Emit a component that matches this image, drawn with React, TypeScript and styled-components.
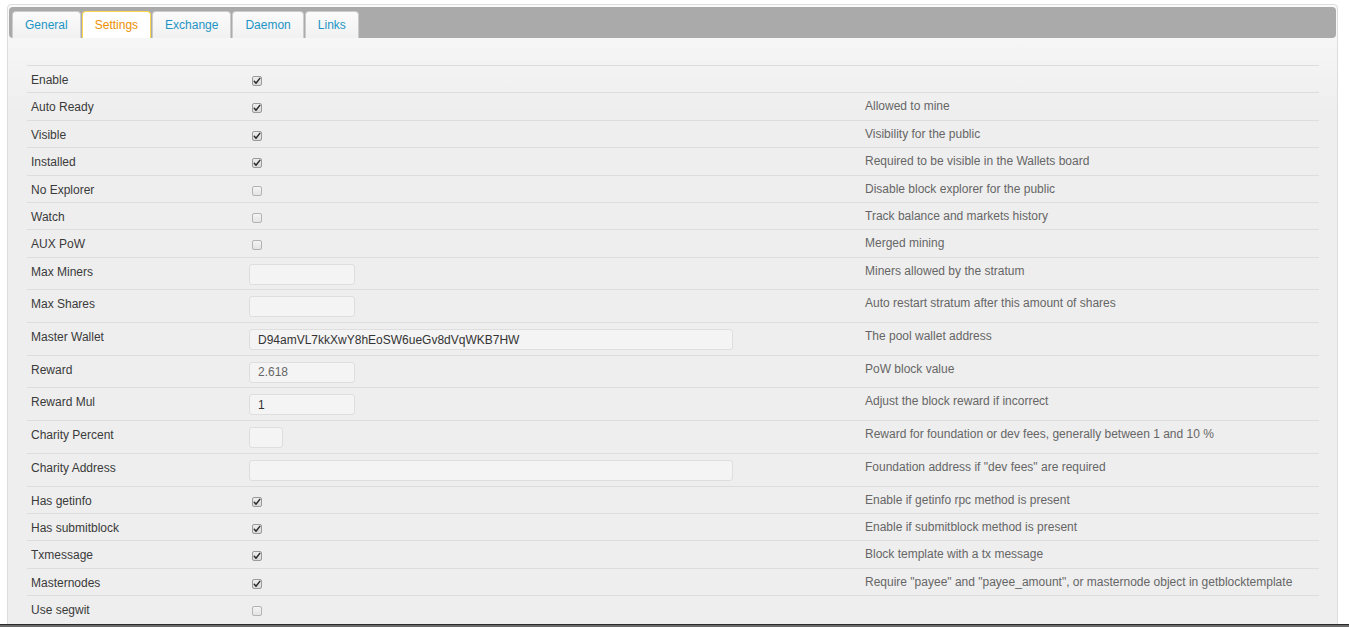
import React from "react";
import styled, { createGlobalStyle } from "styled-components";

const Global = createGlobalStyle`
  html, body { margin: 0; padding: 0; background: #fff; }
  body { font-family: "Liberation Sans", Arial, sans-serif; font-size: 12px; color: #333; }
`;

const Page = styled.div`
  padding: 4px 11px 0 7px;
`;

const Panel = styled.div`
  border: 1px solid #dddddd;
  border-radius: 4px;
  background: linear-gradient(#fafafa, #f3f3f3 60px, #eeeeee 110px);
  padding: 2px 1px 40px 1px;
`;

const TabBar = styled.div`
  display: flex;
  gap: 1px;
  background: #aaaaaa;
  border-radius: 4px;
  padding: 4px 3px 0 3px;
  height: 27px;
`;

const Tab = styled.div<{ $active?: boolean }>`
  display: flex;
  align-items: center;
  height: 26px;
  padding: 0 12px;
  border: 1px solid ${(p) => (p.$active ? "#fbd850" : "#cccccc")};
  border-bottom: none;
  border-radius: 4px 4px 0 0;
  background: ${(p) => (p.$active ? "#ffffff" : "linear-gradient(#fbfbfb, #f1f1f1)")};
  color: ${(p) => (p.$active ? "#eb8f00" : "#1c94c4")};
  font-size: 12px;
`;

const Content = styled.div`
  padding: 27px 17px 0 18px;
`;

const Table = styled.div`
  display: flex;
  flex-direction: column;
`;

const Row = styled.div<{ $tall?: boolean }>`
  display: grid;
  grid-template-columns: 222px 616px 1fr;
  align-items: start;
  box-sizing: border-box;
  height: ${(p) => (p.$tall ? "32.7px" : "27.4px")};
  border-top: 1px solid #dddddd;
  padding-top: 6px;
`;

const Label = styled.div`
  padding: 1px 0 0 4px;
  line-height: 15px;
  color: #3a3a3a;
`;

const Desc = styled.div`
  line-height: 15px;
  color: #666666;
`;

const Field = styled.div`
  display: flex;
  align-items: center;
  min-height: 15px;
`;

const Box = styled.span<{ $on?: boolean }>`
  display: inline-flex;
  align-items: center;
  justify-content: center;
  box-sizing: border-box;
  width: 10px;
  height: 10px;
  margin-left: 3px;
  margin-top: 3px;
  border: 1px solid ${(p) => (p.$on ? "#9a9a9a" : "#b3b3b3")};
  border-radius: 2px;
  background: ${(p) => (p.$on ? "linear-gradient(#eeeeee, #d9d9d9)" : "linear-gradient(#f4f4f4, #e4e4e4)")};
`;

const Input = styled.input<{ $w: number; $muted?: boolean }>`
  box-sizing: border-box;
  width: ${(p) => p.$w}px;
  height: 21px;
  border: 1px solid #dedede;
  border-radius: 3px;
  background: #f4f4f4;
  padding: 0 8px;
  font-family: "Liberation Sans", Arial, sans-serif;
  font-size: 12px;
  color: ${(p) => (p.$muted ? "#666" : "#333")};
  outline: none;
`;

const Footer = styled.div`
  position: fixed;
  left: 0;
  right: 0;
  bottom: 0;
  height: 2px;
  border-top: 1px solid #2a2a2a;
  background: #6a6a6a;
`;

type Item =
  | { label: string; kind: "check"; on: boolean; desc?: string }
  | { label: string; kind: "input"; w: number; value?: string; muted?: boolean; desc?: string };

const items: Item[] = [
  { label: "Enable", kind: "check", on: true },
  { label: "Auto Ready", kind: "check", on: true, desc: "Allowed to mine" },
  { label: "Visible", kind: "check", on: true, desc: "Visibility for the public" },
  { label: "Installed", kind: "check", on: true, desc: "Required to be visible in the Wallets board" },
  { label: "No Explorer", kind: "check", on: false, desc: "Disable block explorer for the public" },
  { label: "Watch", kind: "check", on: false, desc: "Track balance and markets history" },
  { label: "AUX PoW", kind: "check", on: false, desc: "Merged mining" },
  { label: "Max Miners", kind: "input", w: 106, desc: "Miners allowed by the stratum" },
  { label: "Max Shares", kind: "input", w: 106, desc: "Auto restart stratum after this amount of shares" },
  { label: "Master Wallet", kind: "input", w: 484, value: "D94amVL7kkXwY8hEoSW6ueGv8dVqWKB7HW", desc: "The pool wallet address" },
  { label: "Reward", kind: "input", w: 106, value: "2.618", muted: true, desc: "PoW block value" },
  { label: "Reward Mul", kind: "input", w: 106, value: "1", desc: "Adjust the block reward if incorrect" },
  { label: "Charity Percent", kind: "input", w: 34, desc: "Reward for foundation or dev fees, generally between 1 and 10 %" },
  { label: "Charity Address", kind: "input", w: 484, desc: "Foundation address if \"dev fees\" are required" },
  { label: "Has getinfo", kind: "check", on: true, desc: "Enable if getinfo rpc method is present" },
  { label: "Has submitblock", kind: "check", on: true, desc: "Enable if submitblock method is present" },
  { label: "Txmessage", kind: "check", on: true, desc: "Block template with a tx message" },
  { label: "Masternodes", kind: "check", on: true, desc: "Require \"payee\" and \"payee_amount\", or masternode object in getblocktemplate" },
  { label: "Use segwit", kind: "check", on: false },
];

const Check = ({ on }: { on: boolean }) => (
  <Box $on={on}>
    {on && (
      <svg width="8" height="8" viewBox="0 0 8 8">
        <path d="M1.3 4.3 L3 6.2 L6.8 1.4" fill="none" stroke="#2b2b2b" strokeWidth="1.5" strokeLinecap="round" strokeLinejoin="round" />
      </svg>
    )}
  </Box>
);

const tabs = ["General", "Settings", "Exchange", "Daemon", "Links"];

export default function App() {
  return (
    <>
      <Global />
      <Page>
        <Panel>
          <TabBar>
            {tabs.map((t) => (
              <Tab key={t} $active={t === "Settings"}>
                {t}
              </Tab>
            ))}
          </TabBar>
          <Content>
            <Table>
              {items.map((it) => (
                <Row key={it.label} $tall={it.kind === "input"}>
                  <Label>{it.label}</Label>
                  <Field>
                    {it.kind === "check" ? (
                      <Check on={it.on} />
                    ) : (
                      <Input $w={it.w} $muted={it.muted} defaultValue={it.value ?? ""} />
                    )}
                  </Field>
                  <Desc>{it.desc ?? ""}</Desc>
                </Row>
              ))}
            </Table>
          </Content>
        </Panel>
      </Page>
      <Footer />
    </>
  );
}
